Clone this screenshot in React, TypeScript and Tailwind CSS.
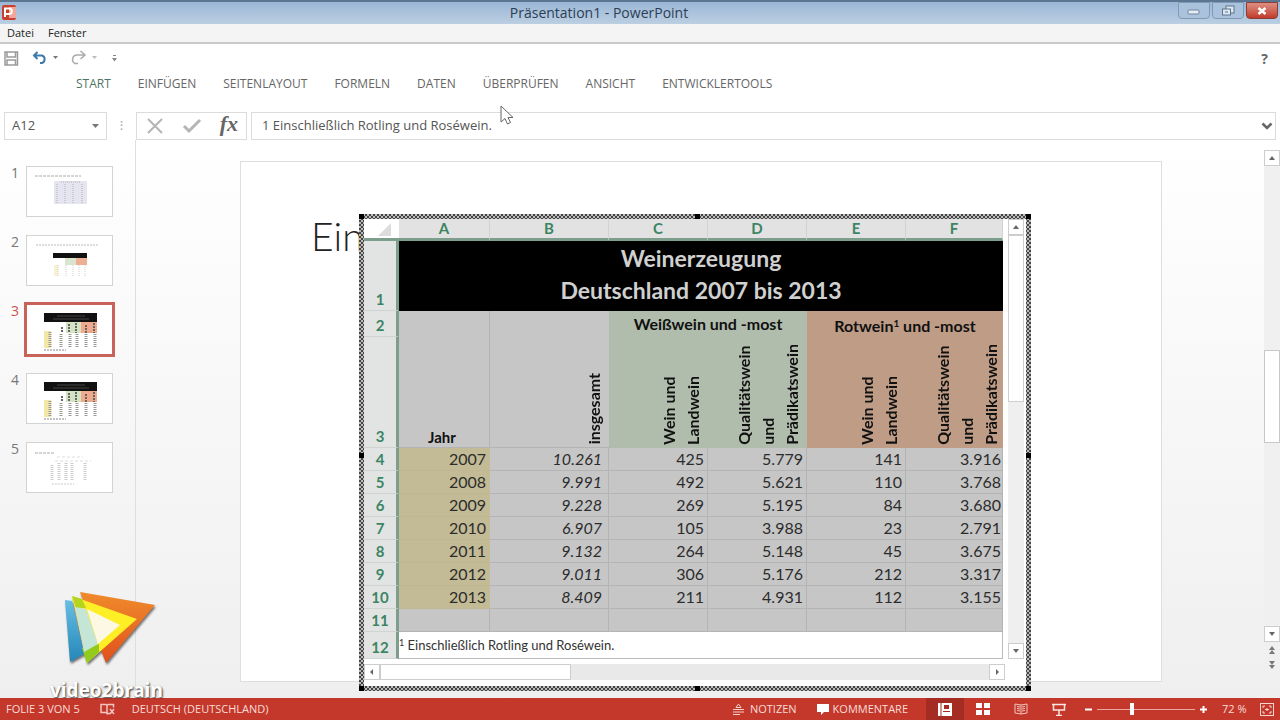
import React from 'react';

const TABS = ['START', 'EINFÜGEN', 'SEITENLAYOUT', 'FORMELN', 'DATEN', 'ÜBERPRÜFEN', 'ANSICHT', 'ENTWICKLERTOOLS'];

const ROWS = [
  ['2007', '10.261', '425', '5.779', '141', '3.916'],
  ['2008', '9.991', '492', '5.621', '110', '3.768'],
  ['2009', '9.228', '269', '5.195', '84', '3.680'],
  ['2010', '6.907', '105', '3.988', '23', '2.791'],
  ['2011', '9.132', '264', '5.148', '45', '3.675'],
  ['2012', '9.011', '306', '5.176', '212', '3.317'],
  ['2013', '8.409', '211', '4.931', '112', '3.155'],
];

const ROW_HEAD = 'border-b border-[#cfd4d1] border-r-3 border-r-[#7d9e8c] bg-[#e2e4e3] text-center align-bottom text-[15px] leading-[22px] font-bold text-[#3c8564]';
const CELL = 'border-r border-b border-[#b4b4b4] bg-[#c6c6c6] pr-[3px] text-right last:pr-px';

const Arrow: React.FC<{ dir: 'up' | 'down' | 'left' | 'right' }> = ({ dir }) => {
  const points = { up: '0,5 3,1 6,5', down: '0,1 6,1 3,5', left: '4,0 4,6 1,3', right: '2,0 2,6 5,3' };
  return (
    <svg width="6" height="6" viewBox="0 0 6 6" fill="#666">
      <polygon points={points[dir]} />
    </svg>
  );
};

const ScrollButton: React.FC<{ dir: 'up' | 'down' | 'left' | 'right'; label: string }> = ({ dir, label }) => (
  <button aria-label={label} className="flex h-4 w-4 shrink-0 items-center justify-center border border-[#cdcdcd] bg-white">
    <Arrow dir={dir} />
  </button>
);

const TitleBar: React.FC = () => (
  <header className="flex h-6 items-center border-t-2 border-[#5c7691] bg-linear-to-b from-[#9bb6d6] to-[#bccfe2] pr-0.5">
    <svg width="20" height="18" viewBox="0 0 20 18">
      <rect x="2" y="1" width="14" height="15" rx="2" fill="#c9402f" />
      <rect x="9" y="3" width="7" height="11" fill="#f0a79a" />
      <path d="M5 13V4.500h4a2.500 2.500 0 0 1 0 5.500H5" fill="none" stroke="#fff" strokeWidth="2" />
    </svg>
    <h1 className="flex-1 text-center text-[14px] leading-5 text-[#2c3f55]">Präsentation1 - PowerPoint</h1>
    <div className="flex h-full items-start gap-0.5">
      <button aria-label="Minimieren" className="flex h-[17px] w-8 items-center justify-center rounded-b border border-[#7f99b8] bg-[#abc2dc]">
        <svg width="14" height="8" viewBox="0 0 14 8"><rect x="1" y="3" width="11" height="4" rx="1" fill="#e4edf6" stroke="#6d839c" /></svg>
      </button>
      <button aria-label="Wiederherstellen" className="flex h-[17px] w-8 items-center justify-center rounded-b border border-[#7f99b8] bg-[#abc2dc]">
        <svg width="14" height="12" viewBox="0 0 14 12" fill="#dfe9f4" stroke="#5d728b"><rect x="5" y="1" width="8" height="7" /><rect x="1.500" y="4" width="8" height="6" /><path d="M4 7h3" /></svg>
      </button>
      <button aria-label="Schließen" className="flex h-[17px] w-8 items-center justify-center rounded-b border border-[#8a3d35] bg-linear-to-b from-[#dd8f82] to-[#c0392a]">
        <svg width="10" height="8" viewBox="0 0 10 8" stroke="#fff" strokeWidth="2.500"><path d="M1.500 1l7 6M8.500 1l-7 6" /></svg>
      </button>
    </div>
  </header>
);

const QuickAccess: React.FC = () => (
  <div className="flex h-7 items-center pl-1 pr-3">
    <button aria-label="Speichern">
      <svg width="15" height="15" viewBox="0 0 15 15" fill="none" stroke="#9a9a9a" strokeWidth="1.500"><path d="M1 1h12.500v13H1zM3 1v5h8.500V1M3 14V9h8.500v5" /></svg>
    </button>
    <button aria-label="Rückgängig" className="ml-3 flex items-center gap-1">
      <svg width="18" height="16" viewBox="0 0 18 16" fill="none" stroke="#3f7aa9" strokeWidth="2"><path d="M6.500 2L3 5.500 6.500 9M3 5.500h8a4 4 0 0 1 0 7.500H9" /></svg>
      <svg width="5" height="4" viewBox="0 0 5 4" fill="#777"><path d="M0 0h5L2.500 3z" /></svg>
    </button>
    <button aria-label="Wiederholen" className="ml-3 flex items-center gap-1">
      <svg width="18" height="16" viewBox="0 0 18 16" fill="none" stroke="#ababab" strokeWidth="1.500"><path d="M10.500 1L15 5l-4.500 4M15 5H7a4.500 4.500 0 0 0-2 8.500h3" /></svg>
      <svg width="5" height="4" viewBox="0 0 5 4" fill="#bbb"><path d="M0 0h5L2.500 3z" /></svg>
    </button>
    <button aria-label="Symbolleiste anpassen" className="ml-3.5">
      <svg width="7" height="10" viewBox="0 0 7 10" fill="#888"><path d="M2 2h3v1H2zM1 5h5L3.500 8.500z" /></svg>
    </button>
    <button aria-label="Hilfe" className="ml-auto text-[14px] font-bold text-[#666]">?</button>
  </div>
);

const FormulaBar: React.FC = () => (
  <div className="mt-4 flex h-7 items-stretch pl-1 pr-1 text-[13px] text-[#555]">
    <div className="flex w-[103px] items-center border border-[#dcdcdc] bg-white px-[7px]">
      <input aria-label="Namenfeld" defaultValue="A12" className="w-full min-w-0 outline-none" />
      <svg width="7" height="4" viewBox="0 0 7 4" fill="#777" className="shrink-0"><path d="M0 0h7L3.500 4z" /></svg>
    </div>
    <div className="flex w-[29px] items-center justify-center text-[#aaa]">⁝</div>
    <div className="flex w-[111px] items-center justify-between border border-[#dcdcdc] bg-white px-2">
      <button aria-label="Abbrechen">
        <svg width="20" height="18" viewBox="0 0 20 18" stroke="#b5b5b5" strokeWidth="2"><path d="M3 2l14 14M17 2L3 16" /></svg>
      </button>
      <button aria-label="Eingeben">
        <svg width="20" height="16" viewBox="0 0 20 16" fill="none" stroke="#b5b5b5" strokeWidth="3"><path d="M2 8l5 5L18 2" /></svg>
      </button>
      <button aria-label="Funktion einfügen" className="pb-1 font-['Liberation_Serif',serif] text-[22px] leading-6 font-bold text-[#666] italic">fx</button>
    </div>
    <div className="ml-1 flex flex-1 items-center border border-[#dcdcdc] bg-white pr-0.5 pl-2.5">
      <input aria-label="Bearbeitungsleiste" defaultValue="1 Einschließlich Rotling und Roséwein." className="min-w-0 flex-1 outline-none" />
      <svg width="12" height="8" viewBox="0 0 12 8" fill="none" stroke="#666" strokeWidth="2.500"><path d="M1.500 1.500L6 6l4.500-4.500" /></svg>
    </div>
  </div>
);

const DarkTableThumb: React.FC = () => (
  <g>
    <rect x="17" y="8" width="53" height="9" fill="#111" />
    <path d="M30 11h28M26 14h36" stroke="#444" />
    <rect x="39" y="17" width="15" height="11" fill="#d3e3c4" />
    <rect x="54" y="17" width="16" height="11" fill="#efa98d" />
    <rect x="17" y="26" width="7" height="17" fill="#f3e7a6" />
    <path d="M42 19v9M49 18v10M59 20v8M67 18v10M35 22v6" stroke="#666" strokeWidth="2" strokeDasharray="2 1" />
    <path d="M23 27v15M34 29v13M43 29v13M50 29v13M59 29v13M68 29v13" stroke="#999" strokeWidth="3" strokeDasharray="1 1" />
    <path d="M17 45h22" stroke="#888" strokeDasharray="2 1" />
  </g>
);

const THUMBS = [
  <g>
    <path d="M8 9h46" stroke="#aaa" strokeDasharray="3 1" />
    <rect x="27" y="14" width="33" height="23" fill="#e5e5f1" />
    <path d="M30 17v20M38 17v20M46 17v20M55 17v20M34 15h19" stroke="#ccc" strokeWidth="2" strokeDasharray="1 1" />
  </g>,
  <g>
    <path d="M9 9h63" stroke="#bbb" strokeDasharray="2 1" />
    <rect x="26" y="17" width="34" height="5" fill="#111" />
    <rect x="38" y="22" width="11" height="7" fill="#d9e5ce" />
    <rect x="49" y="22" width="11" height="7" fill="#edb095" />
    <rect x="27" y="29" width="4" height="11" fill="#f8f2d0" />
    <path d="M31 29v12M39 29v12M46 29v12M52 29v12M58 29v12" stroke="#ccc" strokeDasharray="1 1" />
  </g>,
  <DarkTableThumb />,
  <DarkTableThumb />,
  <g>
    <path d="M8 10h20" stroke="#aaa" strokeDasharray="3 1" />
    <path d="M30 14h26M28 18h36" stroke="#ddd" strokeDasharray="3 2" />
    <path d="M25 22v16M32 20v18M39 20v18M45 20v18M58 20v18" stroke="#ccc" strokeWidth="3" strokeDasharray="1 1" />
    <path d="M25 41h22" stroke="#ccc" strokeDasharray="2 1" />
  </g>,
];

const SlideList: React.FC = () => (
  <aside className="w-[136px] shrink-0 border-r border-[#dedede]">
    <ol className="flex flex-col gap-3.5 pt-6 pl-2">
      {THUMBS.map((thumb, i) => (
        <li key={i} className="flex h-[55px] items-start">
          <span className={i === 2 ? 'w-4 pl-[3px] text-[14px] leading-[18px] text-[#c8564c]' : 'w-4 pl-[3px] text-[14px] leading-[18px] text-[#777]'}>{i + 1}</span>
          <button
            aria-label={`Folie ${i + 1}`}
            className={i === 2 ? 'h-[55px] w-[91px] border-3 border-[#c96259] bg-white' : 'm-0.5 h-[51px] w-[87px] border border-[#d3d3d3] bg-white'}
          >
            <svg width="85" height="49" viewBox="0 0 85 49">{thumb}</svg>
          </button>
        </li>
      ))}
    </ol>
  </aside>
);

const UprightText: React.FC<{ lines: string[] }> = ({ lines }) => (
  <div className="flex items-end justify-end">
    <div className="rotate-180 text-left text-[16px] leading-6 [writing-mode:vertical-rl]">
      {lines.map((line) => <div key={line}>{line}</div>)}
    </div>
  </div>
);

const Sheet: React.FC = () => (
  <table className="w-[639px] table-fixed border-separate border-spacing-0 text-[16px] leading-[22px] text-[#2c2c2c]">
    <colgroup>
      <col className="w-[35px]" />
      <col className="w-[91px]" />
      <col className="w-[119px]" />
      <col className="w-[99px]" />
      <col className="w-[99px]" />
      <col className="w-[99px]" />
      <col className="w-[97px]" />
    </colgroup>
    <thead>
      <tr className="h-[22px] text-[15px] leading-[19px] text-[#3c8564]">
        <th className="border-b-3 border-[#7d9e8c] bg-white">
          <svg width="32" height="19" viewBox="0 0 32 19"><path d="M27 4v13H14z" fill="#dcdcdc" /></svg>
        </th>
        {['A', 'B', 'C', 'D', 'E', 'F'].map((c) => (
          <th key={c} scope="col" className="border-r border-b-3 border-r-[#cfd4d1] border-b-[#7d9e8c] bg-[#e2e2e2]">{c}</th>
        ))}
      </tr>
    </thead>
    <tbody>
      <tr className="h-[70px]">
        <th scope="row" className={ROW_HEAD}>1</th>
        <th colSpan={6} className="bg-black pb-1 text-[23px] leading-8 text-[#d0d0d0]">
          Weinerzeugung<br />Deutschland 2007 bis 2013
        </th>
      </tr>
      <tr className="h-[26px] text-[#111]">
        <th scope="row" className={ROW_HEAD}>2</th>
        <th rowSpan={2} className="border-r border-b border-[#b4b4b4] bg-[#c6c6c6] pr-1 align-bottom text-[15px] leading-5">Jahr</th>
        <th rowSpan={2} className="border-b border-[#b4b4b4] bg-[#c6c6c6] p-[3px] align-bottom"><UprightText lines={['insgesamt']} /></th>
        <th colSpan={2} className="bg-[#b0bdac]">Weißwein und -most</th>
        <th colSpan={2} className="bg-[#be9c86] pt-1">Rotwein<sup className="text-[10px]">1</sup> und -most</th>
      </tr>
      <tr className="h-[111px] text-[#111]">
        <th scope="row" className={ROW_HEAD}>3</th>
        <th className="bg-[#b0bdac] p-[3px] align-bottom"><UprightText lines={['Wein und', 'Landwein']} /></th>
        <th className="bg-[#b0bdac] p-[3px] align-bottom"><UprightText lines={['Qualitätswein', 'und', 'Prädikatswein']} /></th>
        <th className="bg-[#be9c86] p-[3px] align-bottom"><UprightText lines={['Wein und', 'Landwein']} /></th>
        <th className="bg-[#be9c86] px-0 py-[3px] align-bottom"><UprightText lines={['Qualitätswein', 'und', 'Prädikatswein']} /></th>
      </tr>
      {ROWS.map(([year, total, ...rest], i) => (
        <tr key={year} className="h-[23px]">
          <th scope="row" className={ROW_HEAD}>{i + 4}</th>
          <td className="border-b border-[#bfb792] bg-[#c3bb96] pr-1 text-right">{year}</td>
          <td className="border-r border-b border-[#b4b4b4] bg-[#c6c6c6] pr-1.5 text-right italic">{total}</td>
          {rest.map((value, j) => (
            <td key={j} className={CELL}>{value}</td>
          ))}
        </tr>
      ))}
      <tr className="h-[23px]">
        <th scope="row" className={ROW_HEAD}>11</th>
        {[0, 1, 2, 3, 4, 5].map((c) => <td key={c} className={CELL} />)}
      </tr>
      <tr className="h-[27px]">
        <th scope="row" className={ROW_HEAD}>12</th>
        <td colSpan={6} className="border-r border-b border-[#bbb] bg-white text-[13px] text-[#333]">
          <sup className="text-[9px]">1</sup> Einschließlich Rotling und Roséwein.
        </td>
      </tr>
    </tbody>
  </table>
);

const HANDLES = [
  'top-0 left-0', 'top-0 left-1/2', 'top-0 right-0',
  'top-1/2 left-0', 'top-1/2 right-0',
  'bottom-0 left-0', 'bottom-0 left-1/2', 'bottom-0 right-0',
];

// In-place Excel object that floats over the slide
const EmbeddedObject: React.FC = () => (
  <div className="absolute top-[52px] left-[118px] w-[672px] bg-[conic-gradient(#444_25%,#bbb_0_50%,#444_0_75%,#bbb_0)] bg-[length:4px_4px] p-[5px] font-[Lato,'Open_Sans',sans-serif]">
    {HANDLES.map((place) => <span key={place} className={`absolute h-[5px] w-[5px] bg-black ${place}`} />)}
    <div className="bg-white pb-1.5">
      <div className="flex justify-between pr-0.5">
        <Sheet />
        <div className="flex w-4 flex-col bg-[#efefef]">
          <ScrollButton dir="up" label="Tabelle nach oben" />
          <div className="h-[167px] border border-[#cdcdcd] bg-white" />
          <div className="flex-1" />
          <ScrollButton dir="down" label="Tabelle nach unten" />
        </div>
      </div>
      <div className="mt-[5px] flex w-[641px] bg-[#e9e9e9]">
        <ScrollButton dir="left" label="Tabelle nach links" />
        <div className="w-[191px] border border-[#cdcdcd] bg-white" />
        <div className="flex-1" />
        <ScrollButton dir="right" label="Tabelle nach rechts" />
      </div>
    </div>
  </div>
);

const WorkArea: React.FC = () => (
  <main className="flex flex-1 flex-col pt-[21px] pr-[102px] pb-4 pl-[104px]">
    <section className="relative flex-1 border border-[#dedede] bg-white pt-[50px] pl-[70px]">
      <h2 className="font-[Lato,'Open_Sans',sans-serif] text-[39px] leading-[48px] font-light text-[#222]">Ein</h2>
      <EmbeddedObject />
    </section>
  </main>
);

const SlideScroll: React.FC = () => (
  <div className="mt-2.5 mb-7 flex w-4 shrink-0 flex-col items-center bg-[#f0f0f0]">
    <ScrollButton dir="up" label="Nach oben" />
    <div className="flex-1" />
    <div className="h-[93px] w-4 border border-[#c8c8c8] bg-white" />
    <div className="flex-1" />
    <ScrollButton dir="down" label="Nach unten" />
    <button aria-label="Vorherige Folie" className="mt-1">
      <svg width="8" height="10" viewBox="0 0 8 10" fill="#777"><path d="M4 0l3 4H1zM4 4l3 4H1z" /></svg>
    </button>
    <button aria-label="Nächste Folie" className="mt-1">
      <svg width="8" height="10" viewBox="0 0 8 10" fill="#777"><path d="M4 5l3-4H1zM4 9l3-4H1z" /></svg>
    </button>
  </div>
);

const Brand: React.FC = () => (
  <div className="pointer-events-none absolute bottom-[18px] left-[50px] w-[120px]">
    <svg width="116" height="86" viewBox="0 4 116 86" className="overflow-visible drop-shadow-[1px_2px_1px_#0008]">
      <defs>
        <linearGradient id="blue" x1="0" y1="0" x2="0" y2="1"><stop offset="0" stopColor="#65bfe4" /><stop offset="1" stopColor="#2586b8" /></linearGradient>
        <linearGradient id="orange" x1="0" y1="0" x2="0" y2="1"><stop offset="0" stopColor="#f08b2b" /><stop offset="1" stopColor="#e0501d" /></linearGradient>
      </defs>
      <path d="M15 12L22 13 34 66 20 74z" fill="url(#blue)" />
      <path d="M30 4L105 17 56 75 50 60z" fill="url(#orange)" />
      <path d="M22 8L87 31 37 75z" fill="#fdee25" />
      <path d="M22 8L32 11 36 20 26 20z" fill="#b4d41f" />
      <path d="M32 60L49 56 49 64 37 75z" fill="#93cb1d" />
      <path d="M25 19L36 21 48 56 34 64z" fill="#c5e6d6" />
      <path d="M37 21L70 37 48 56z" fill="#fcf8e4" />
    </svg>
    <div className="text-[19px] leading-6 font-bold text-white [text-shadow:1px_1px_2px_#333]">video2brain</div>
  </div>
);

const StatusBar: React.FC = () => (
  <footer className="flex h-[22px] items-center bg-[#c4382b] pl-1.5 text-[11px] text-[#f8dcd8]">
    <span>FOLIE 3 VON 5</span>
    <button aria-label="Rechtschreibung" className="ml-5">
      <svg width="15" height="13" viewBox="0 0 15 13" fill="none" stroke="#f3c4be" strokeWidth="1.500"><path d="M1 1.500h5l1 1v8l-1-1H1zM7 2.500l1-1h5.500v3M7 10.500h3M10 6l4 5M14 6l-4 5" /></svg>
    </button>
    <button className="ml-[17px]">DEUTSCH (DEUTSCHLAND)</button>
    <button className="ml-auto flex items-center gap-1.5">
      <svg width="11" height="12" viewBox="0 0 11 12" fill="none" stroke="#f6cfca"><path d="M3 4.500L5.500 1 8 4.500zM0 6.500h11M0 9h11M0 11.500h7" /></svg>
      NOTIZEN
    </button>
    <button className="ml-5 flex items-center gap-1">
      <svg width="12" height="12" viewBox="0 0 12 12" fill="#fff"><path d="M0 1h12v8H7l-3 3V9H0z" /></svg>
      KOMMENTARE
    </button>
    <div className="ml-[18px] flex h-full">
      <button aria-label="Normalansicht" className="flex h-full w-[38px] items-center justify-center bg-[#a52c22]">
        <svg width="14" height="13" viewBox="0 0 14 13"><path d="M0 0h14v13H0z" fill="#fff" /><path d="M3 0v13M5 8.500h7" stroke="#a52c22" /><path d="M6 2h5v4H6z" fill="#a52c22" /></svg>
      </button>
      <button aria-label="Foliensortierung" className="flex h-full w-[38px] items-center justify-center">
        <svg width="14" height="13" viewBox="0 0 14 13" fill="#fff"><path d="M0 0h6v5H0zM8 0h6v5H8zM0 7h6v5H0zM8 7h6v5H8z" /></svg>
      </button>
      <button aria-label="Leseansicht" className="flex h-full w-[38px] items-center justify-center">
        <svg width="14" height="12" viewBox="0 0 14 12" fill="none" stroke="#f3c4be"><path d="M7 2L1 1v9l6 1 6-1V1L7 2v9M3 3.500l3 .500M3 5.500l3 .500M3 7.500l3 .500M8 4l3-.500M8 6l3-.500M8 8l3-.500" /></svg>
      </button>
      <button aria-label="Bildschirmpräsentation" className="flex h-full w-[38px] items-center justify-center">
        <svg width="14" height="13" viewBox="0 0 14 13" fill="none" stroke="#fbe3e0"><path d="M0 1.500h14M1.500 2v5h11V2M7 7v5M4 12.500h6" strokeWidth="1.500" /></svg>
      </button>
    </div>
    <button aria-label="Verkleinern" className="ml-1.5">
      <svg width="9" height="9" viewBox="0 0 9 9" stroke="#fff" strokeWidth="2"><path d="M1 4.500h7" /></svg>
    </button>
    <input
      type="range"
      aria-label="Zoom"
      min={0}
      max={100}
      defaultValue={35}
      className="mx-1 h-3 w-[98px] appearance-none bg-[linear-gradient(#e9a9a2,#e9a9a2)] bg-[length:100%_1px] bg-center bg-no-repeat [&::-webkit-slider-thumb]:h-3 [&::-webkit-slider-thumb]:w-1 [&::-webkit-slider-thumb]:appearance-none [&::-webkit-slider-thumb]:bg-white"
    />
    <button aria-label="Vergrößern">
      <svg width="9" height="9" viewBox="0 0 9 9" stroke="#fff" strokeWidth="2"><path d="M1 4.500h7M4.500 1v7" /></svg>
    </button>
    <span className="ml-3.5 w-7">72 %</span>
    <button aria-label="An Fenster anpassen" className="mr-1.5 ml-2.5">
      <svg width="14" height="13" viewBox="0 0 14 13" fill="none" stroke="#f8d5d0"><rect x=".5" y=".5" width="13" height="12" /><path d="M3 5V3h2M9 3h2v2M11 8v2H9M5 10H3V8M5 6.500h4M7 5v3" /></svg>
    </button>
  </footer>
);

const App: React.FC = () => {
  return (
    <div className="relative flex min-h-screen flex-col bg-white font-['Open_Sans','Noto_Sans',sans-serif]">
      <TitleBar />
      <nav className="flex h-5 items-center gap-3.5 border-b-2 border-[#c9c9c9] bg-[#f4f4f4] pl-[7px] text-[11px] leading-4 text-[#222]">
        <button>Datei</button>
        <button>Fenster</button>
      </nav>
      <QuickAccess />
      <nav className="flex h-6 items-center gap-[27px] pl-[76px] text-[12px] text-[#666]">
        {TABS.map((tab) => (
          <button key={tab} className={tab === 'START' ? 'text-[#4f7563]' : ''}>{tab}</button>
        ))}
      </nav>
      <FormulaBar />
      <div className="flex flex-1 bg-linear-to-b from-white to-[#efefef]">
        <SlideList />
        <WorkArea />
        <SlideScroll />
      </div>
      <StatusBar />
      <Brand />
      <svg width="14" height="21" viewBox="0 0 14 21" className="pointer-events-none absolute top-[105px] left-[500px]">
        <path d="M1 1v16l4-3.500 2.500 5.500 3-1.500L8 12.500h5z" fill="#fff" stroke="#666" />
      </svg>
    </div>
  );
};

export default App;
